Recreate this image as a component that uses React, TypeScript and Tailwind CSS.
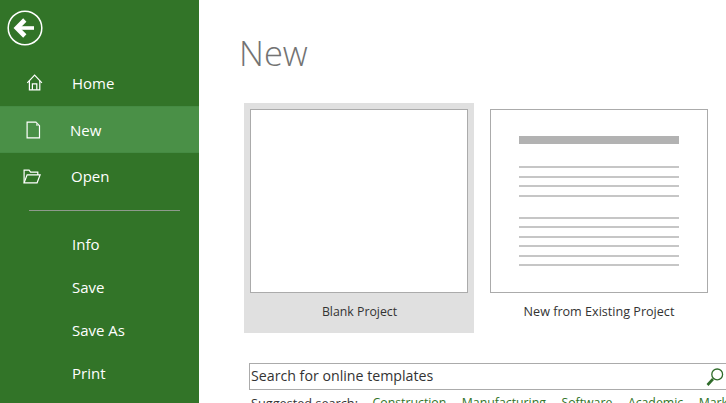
import React from 'react';

const font = { fontFamily: '"Open Sans", "Noto Sans", sans-serif' };

const HomeIcon = () => (
  <svg width="18" height="18" viewBox="0 0 18 18" fill="none" stroke="white" strokeWidth="1.2">
    <path d="M1.3 8.8 8.6 1.2l7.3 7.6" />
    <path d="M3.4 6.8v9h10.4v-9" />
    <path d="M6.4 15.8v-6h4.4v6" />
  </svg>
);

const PageIcon = () => (
  <svg width="15" height="18" viewBox="0 0 15 18" fill="none" stroke="white" strokeWidth="1.2">
    <path d="M1.1 1.1h8.8l3.6 3.6v12.1H1.1z" />
    <path d="M10 1.2v3.6h3.4z" fill="#c3d9c1" stroke="none" />
  </svg>
);

const FolderIcon = () => (
  <svg width="18" height="15" viewBox="0 0 18 15" fill="none" stroke="white" strokeWidth="1.2">
    <path d="M1.1 13.8V1.1h5l1.5 2h7.2v2.8" />
    <path d="M1.1 13.8h13l3-7.9H4.1z" />
  </svg>
);

const lines1 = [0, 1, 2, 3];
const lines2 = [0, 1, 2, 3, 4, 5];
const suggestions = ['Construction', 'Manufacturing', 'Software', 'Academic', 'Marketing'];

function NavRow({ icon, label, className, pad }: { icon: React.ReactNode; label: string; className: string; pad: string }) {
  return (
    <div className={`flex items-center text-[15px] text-white ${className}`}>
      <div className={`flex w-[68px] ${pad}`}>{icon}</div>
      <span>{label}</span>
    </div>
  );
}

export default function App() {
  return (
    <div className="flex h-[403px] w-[726px] overflow-hidden bg-white" style={font}>
      {/* Sidebar */}
      <div className="flex w-[199px] shrink-0 flex-col overflow-hidden bg-[#327428]">
        <div className="h-[60px] pl-[7px] pt-[10px]">
          <svg width="36" height="36" viewBox="0 0 36 36" fill="none">
            <circle cx="18" cy="18" r="16.8" stroke="white" strokeWidth="1.5" />
            <path d="M10 18h17" stroke="white" strokeWidth="3.6" />
            <path d="M17.8 10 9.8 18l8 8" stroke="white" strokeWidth="4.6" />
          </svg>
        </div>
        <NavRow icon={<HomeIcon />} label="Home" className="h-[46px]" pad="pl-[26px] mr-[4px]" />
        <NavRow icon={<PageIcon />} label="New" className="h-[47px] border-y border-[#458b43] bg-[#4a9047] pt-[1px]" pad="pl-[26px] mr-[2px]" />
        <NavRow icon={<FolderIcon />} label="Open" className="h-[46px]" pad="pl-[23px] mr-[3px]" />
        <div className="ml-[29px] mr-[19px] mt-[11px] h-px bg-[#8f9a8c]" />
        <div className="mt-[12px] flex flex-col pl-[72px] text-[15px] text-white">
          <div className="flex h-[43px] items-center">Info</div>
          <div className="flex h-[43px] items-center">Save</div>
          <div className="flex h-[43px] items-center">Save As</div>
          <div className="flex h-[43px] items-center">Print</div>
        </div>
      </div>

      {/* Main */}
      <div className="min-w-0 flex-1 overflow-hidden">
        <h1 className="ml-[40px] mt-[28px] h-[47px] text-[34.5px] font-light leading-[50px] text-[#737373]">New</h1>

        <div className="ml-[45px] mt-[28px] flex">
          <div className="flex h-[230px] w-[230px] flex-col bg-[#e0e0e0] px-[6px] pt-[6px]">
            <div className="h-[184px] w-[218px] border border-[#ababab] bg-white" />
            <div className="flex h-[38px] items-center justify-center pl-[1px] text-[12.3px] text-[#333]">Blank Project</div>
          </div>
          <div className="ml-[10px] flex h-[230px] w-[230px] flex-col px-[6px] pt-[6px]">
            <div className="h-[184px] w-[218px] border border-[#ababab] bg-white px-[28px] pt-[26px]">
              <div className="h-[8px] w-[160px] bg-[#b2b2b2]" />
              <div className="mt-[22px] flex w-[160px] flex-col gap-[7.5px]">
                {lines1.map((i) => (
                  <div key={i} className="h-[2px] bg-[#c6c6c6]" />
                ))}
              </div>
              <div className="mt-[20px] flex w-[160px] flex-col gap-[7.5px]">
                {lines2.map((i) => (
                  <div key={i} className="h-[2px] bg-[#c6c6c6]" />
                ))}
              </div>
            </div>
            <div className="flex h-[38px] items-center justify-center text-[12.6px] text-[#333]">New from Existing Project</div>
          </div>
        </div>

        <div className="ml-[50px] mt-[30px] flex h-[27px] w-[600px] items-center border border-[#ababab] pl-[1px] text-[14.2px] text-[#333]">
          <span className="pb-[1px]">Search for online templates</span>
          <svg className="ml-[273px] shrink-0" width="18" height="18" viewBox="0 0 18 18" fill="none">
            <circle cx="11.2" cy="6.4" r="5.4" stroke="#2f6b2a" strokeWidth="1.3" />
            <path d="M1.5 17l5.5-6" stroke="#2f6b2a" strokeWidth="2.6" />
          </svg>
        </div>

        <div className="ml-[52px] mt-[4px] flex whitespace-nowrap text-[12.7px]">
          <span className="mr-[-1px] text-[#333]">Suggested search:</span>
          {suggestions.map((s) => (
            <span key={s} className="ml-[15.5px] text-[12.3px] text-[#327428]">{s}</span>
          ))}
        </div>
      </div>
    </div>
  );
}
